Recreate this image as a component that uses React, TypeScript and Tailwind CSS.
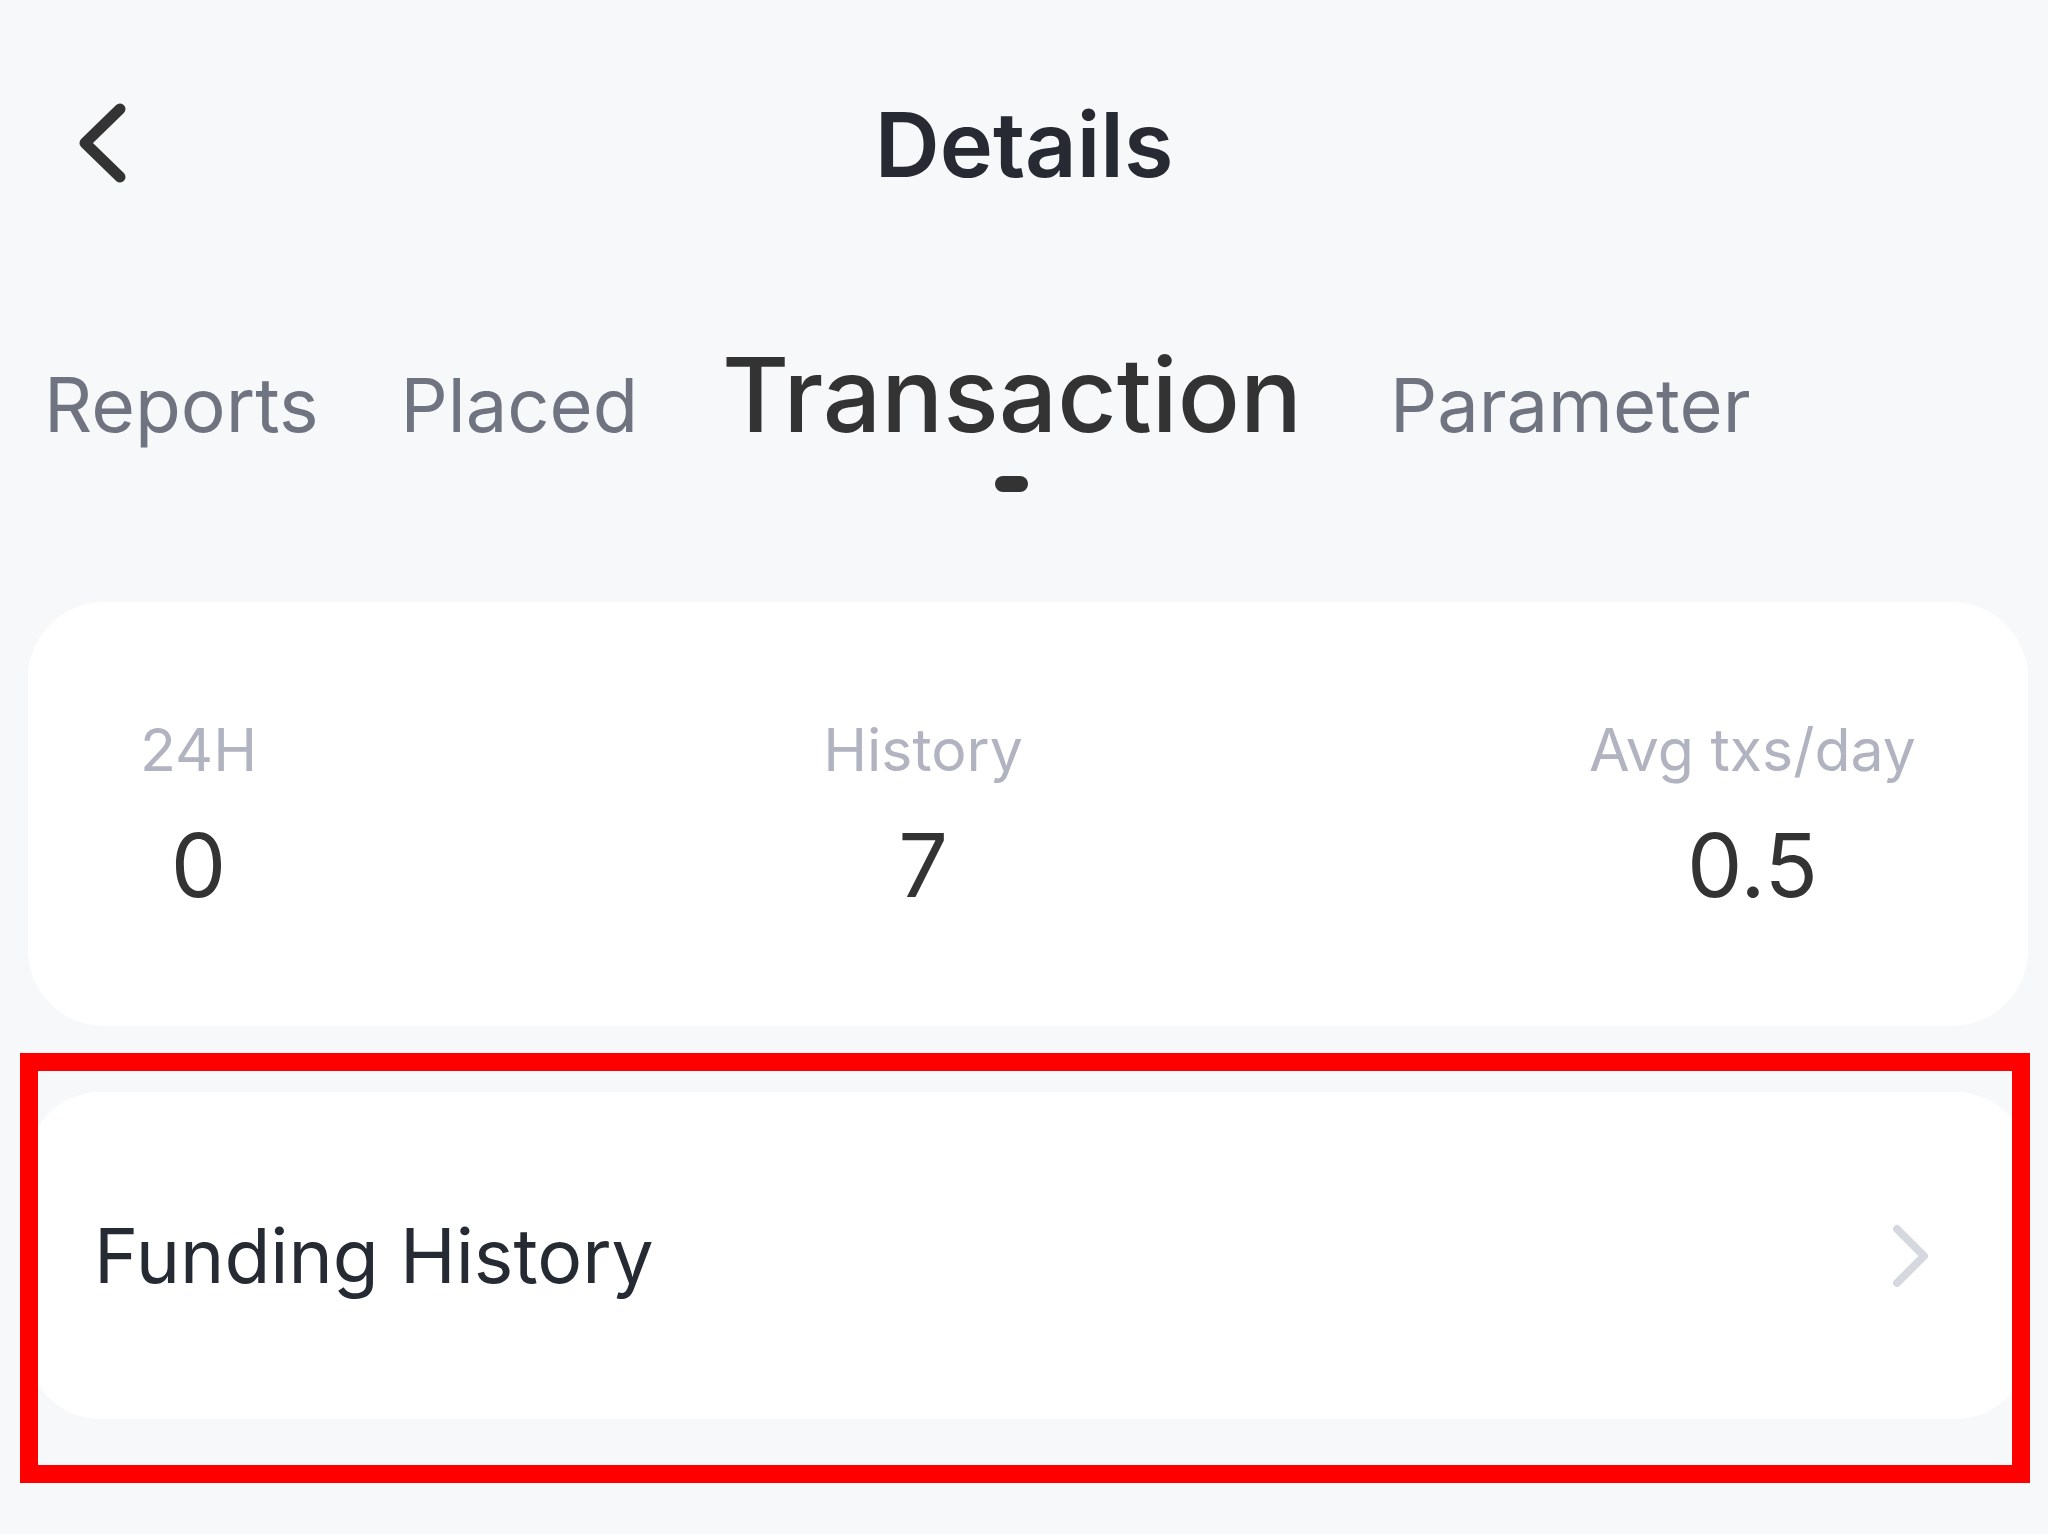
import React from "react";

const font = { fontFamily: "Inter, 'Noto Sans', sans-serif" };

function Stat({ label, value }: { label: string; value: string }) {
  return (
    <div className="flex flex-col items-center">
      <div className="text-[59px] leading-none text-[#b1b4c0] whitespace-nowrap">{label}</div>
      <div className="mt-[42px] text-[88px] leading-none text-[#333333]">{value}</div>
    </div>
  );
}

export default function App() {
  return (
    <div className="relative min-h-screen h-[1534px] w-full bg-[#f7f8fa] overflow-hidden" style={font}>
      {/* Header */}
      <div className="grid h-[289px] grid-cols-[1fr_auto_1fr] items-center">
        <div className="flex items-center">
          <svg className="ml-[70px]" width="60" height="100" viewBox="0 0 60 100" fill="none">
            <polyline points="50,14 15,48 50,82" stroke="#333333" strokeWidth="11" strokeLinecap="round" strokeLinejoin="round" />
          </svg>
        </div>
        <div className="text-[90px] font-semibold leading-none text-[#272a33]">Details</div>
        <div />
      </div>

      {/* Tabs */}
      <div className="mt-[54px] flex items-baseline pl-[44px]">
        <div className="text-[75px] leading-none text-[#6f7480]">Reports</div>
        <div className="ml-[82px] text-[74px] leading-none text-[#6f7480]">Placed</div>
        <div className="ml-[84px] flex flex-col items-center">
          <div className="text-[103px] font-medium leading-none text-[#333333]">Transaction</div>
          <div className="mt-[30px] h-[16px] w-[33px] rounded-full bg-[#333333]" />
        </div>
        <div className="ml-[88px] text-[74px] leading-none text-[#6f7480]">Parameter</div>
      </div>

      {/* Stats card */}
      <div className="ml-[28px] mr-[20px] mt-[110px] flex h-[424px] items-center justify-between rounded-[76px] bg-white px-[112px]">
        <Stat label="24H" value="0" />
        <Stat label="History" value="7" />
        <Stat label="Avg txs/day" value="0.5" />
      </div>

      {/* Funding history card */}
      <div className="ml-[28px] mr-[20px] mt-[66px] flex h-[327px] items-center justify-between rounded-[72px] bg-white pl-[66px] pr-[100px]">
        <div className="text-[75px] leading-none text-[#262a33]">Funding History</div>
        <svg width="40" height="70" viewBox="0 0 40 70" fill="none">
          <polyline points="9,8 36,35 9,62" stroke="#d5d8de" strokeWidth="8" strokeLinecap="round" strokeLinejoin="round" />
        </svg>
      </div>

      {/* Red annotation overlay */}
      <div className="pointer-events-none absolute left-[20px] top-[1053px] h-[430px] w-[2010px] border-[18px] border-[#ff0000]" />
    </div>
  );
}
